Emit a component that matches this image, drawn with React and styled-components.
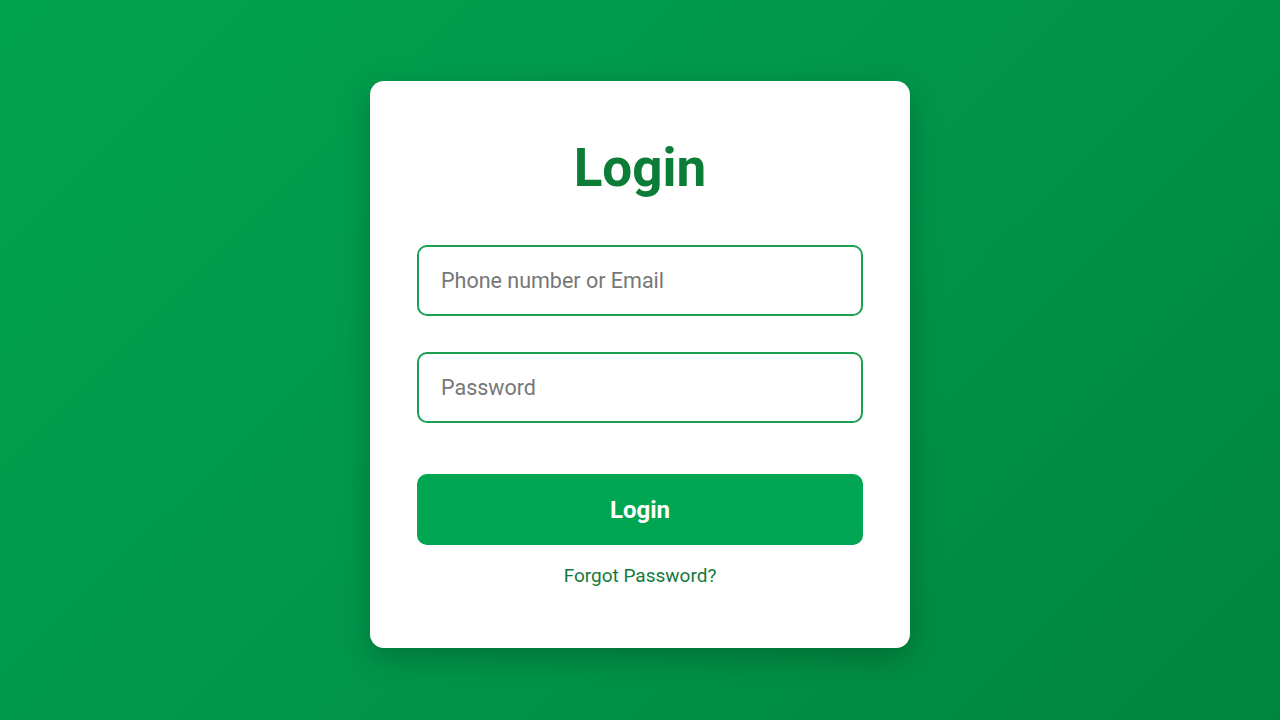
import React from "react";
import styled, { createGlobalStyle } from "styled-components";

const Global = createGlobalStyle`
  * { box-sizing: border-box; }
  html, body { margin: 0; padding: 0; }
  body { font-family: Roboto, "Liberation Sans", sans-serif; }
`;

const Page = styled.div`
  width: 1280px;
  height: 720px;
  background: linear-gradient(135deg, #00a34d 0%, #00964a 50%, #00853c 100%);
  display: flex;
  justify-content: center;
  align-items: flex-start;
  padding-top: 81px;
`;

const Card = styled.form`
  width: 540px;
  height: 567px;
  background: #ffffff;
  border-radius: 14px;
  box-shadow: 0 10px 30px rgba(0, 0, 0, 0.22);
  padding: 54px 47px 0;
  display: flex;
  flex-direction: column;
`;

const Title = styled.h1`
  margin: 0 0 43px;
  font-size: 53px;
  line-height: 67px;
  font-weight: 700;
  color: #0b7d36;
  text-align: center;
`;

const Field = styled.input`
  width: 446px;
  height: 71px;
  border: 2.5px solid #1aa14f;
  border-radius: 10px;
  padding: 0 22px;
  font-family: Roboto, "Liberation Sans", sans-serif;
  font-size: 21.5px;
  color: #333;
  outline: none;
  margin-bottom: ${(p) => p.$gap}px;
  &::placeholder { color: #777; }
`;

const Button = styled.button`
  width: 446px;
  height: 71px;
  border: none;
  border-radius: 10px;
  background: #00a651;
  color: #fff;
  font-family: Roboto, "Liberation Sans", sans-serif;
  font-size: 24px;
  font-weight: 700;
  cursor: pointer;
`;

const Forgot = styled.a`
  margin-top: 20px;
  text-align: center;
  font-size: 19px;
  line-height: 22px;
  color: #137a3e;
  text-decoration: none;
`;

export default function App() {
  return (
    <>
      <Global />
      <Page>
        <Card onSubmit={(e) => e.preventDefault()}>
          <Title>Login</Title>
          <Field type="text" placeholder="Phone number or Email" $gap={36} />
          <Field type="password" placeholder="Password" $gap={51} />
          <Button type="submit">Login</Button>
          <Forgot href="#">Forgot Password?</Forgot>
        </Card>
      </Page>
    </>
  );
}
